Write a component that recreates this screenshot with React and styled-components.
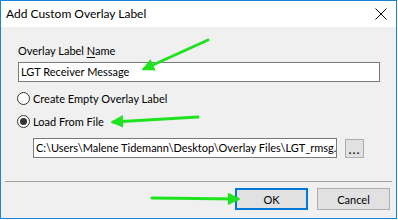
import React from "react";
import styled, { createGlobalStyle } from "styled-components";

const GlobalStyle = createGlobalStyle`
  html, body {
    margin: 0;
    padding: 0;
    background: #ffffff;
  }
  body {
    font-family: Lato, "Noto Sans", sans-serif;
    font-size: 11px;
    color: #000;
  }
`;

const Arrows = () => (
  <Overlay width="398" height="220" viewBox="0 0 398 220">
    <defs>
      <marker
        id="head"
        viewBox="0 0 10 10"
        refX="8"
        refY="5"
        markerWidth="4.2"
        markerHeight="4.2"
        orient="auto"
      >
        <path d="M0 0 L10 5 L0 10 Z" fill="#1fe31f" />
      </marker>
    </defs>
    <line x1="208" y1="40" x2="144" y2="69" stroke="#1fe31f" strokeWidth="3" strokeLinecap="round" markerEnd="url(#head)" />
    <line x1="198" y1="117" x2="113" y2="122" stroke="#1fe31f" strokeWidth="3" strokeLinecap="round" markerEnd="url(#head)" />
    <line x1="152" y1="198" x2="238" y2="199" stroke="#1fe31f" strokeWidth="3" strokeLinecap="round" markerEnd="url(#head)" />
  </Overlay>
);

const CloseIcon = () => (
  <svg width="12" height="12" viewBox="0 0 12 12">
    <path d="M0.5 0.5 L11.5 11.5 M11.5 0.5 L0.5 11.5" stroke="#000" strokeWidth="1" fill="none" />
  </svg>
);

const Radio = ({ checked, label }) => (
  <RadioRow>
    <Circle>{checked && <Dot />}</Circle>
    <span>{label}</span>
  </RadioRow>
);

const App = () => {
  return (
    <>
      <GlobalStyle />
      <Window>
        <TitleBar>
          <Title>Add Custom Overlay Label</Title>
          <Close>
            <CloseIcon />
          </Close>
        </TitleBar>
        <Content>
          <Form>
            <Label>
              Overlay Label <u>N</u>ame
            </Label>
            <TextBox width={362}>LGT Receiver Message</TextBox>
            <Options>
              <Radio label="Create Empty Overlay Label" />
              <Radio checked label="Load From File" />
            </Options>
            <PathRow>
              <TextBox width={304}>
                C:\Users\Malene Tidemann\Desktop\Overlay Files\LGT_rmsg.o
              </TextBox>
              <Browse>...</Browse>
            </PathRow>
          </Form>
          <Divider />
          <Footer>
            <Button primary>OK</Button>
            <Button>Cancel</Button>
          </Footer>
        </Content>
        <Arrows />
      </Window>
    </>
  );
};

export default App;

const Window = styled.div`
  position: relative;
  width: 397px;
  height: 219px;
  box-sizing: border-box;
  border: 1px solid #1883d7;
  display: flex;
  flex-direction: column;
  overflow: hidden;
`;

const TitleBar = styled.div`
  height: 26px;
  background: #ffffff;
  display: flex;
  align-items: center;
  justify-content: space-between;
  padding: 0 9px 0 5px;
`;

const Title = styled.div`
  font-size: 12px;
  line-height: 16px;
`;

const Close = styled.div`
  display: flex;
  align-items: center;
`;

const Content = styled.div`
  flex: 1;
  background: #f0f0f0;
  display: flex;
  flex-direction: column;
`;

const Form = styled.div`
  display: flex;
  flex-direction: column;
  padding: 16px 16px 0 17px;
`;

const Label = styled.div`
  line-height: 16px;
  margin-bottom: 3px;

  u {
    text-decoration-thickness: 1px;
    text-underline-offset: 2px;
  }
`;

const TextBox = styled.div`
  width: ${(p) => p.width}px;
  height: 20px;
  box-sizing: border-box;
  border: 1px solid #7a7a7a;
  background: #ffffff;
  padding: 0 2px;
  line-height: 18px;
  white-space: nowrap;
  overflow: hidden;
  flex-shrink: 0;
`;

const Options = styled.div`
  display: flex;
  flex-direction: column;
  gap: 3px;
  margin-top: 6px;
`;

const RadioRow = styled.div`
  height: 20px;
  display: flex;
  align-items: center;
  gap: 3px;
  margin-left: -1px;
`;

const Circle = styled.div`
  width: 13px;
  height: 13px;
  box-sizing: border-box;
  border-radius: 50%;
  border: 1px solid #333333;
  background: #ffffff;
  display: flex;
  align-items: center;
  justify-content: center;
`;

const Dot = styled.div`
  width: 7px;
  height: 7px;
  border-radius: 50%;
  background: #333333;
`;

const PathRow = styled.div`
  display: flex;
  align-items: center;
  gap: 8px;
  margin-top: 7px;
  padding-left: 15px;
`;

const Browse = styled.div`
  width: 19px;
  height: 19px;
  flex-shrink: 0;
  box-sizing: border-box;
  border: 1px solid #adadad;
  background: #e1e1e1;
  display: flex;
  align-items: center;
  justify-content: center;
  font-size: 13px;
  letter-spacing: 1px;
  line-height: 14px;
  margin-top: 1px;
`;

const Divider = styled.div`
  height: 1px;
  background: #a0a0a0;
  margin: 23px 4px 0;
`;

const Footer = styled.div`
  display: flex;
  justify-content: flex-end;
  gap: 9px;
  padding: 6px 6px 0 0;
`;

const Button = styled.div`
  width: 73px;
  height: 22px;
  box-sizing: border-box;
  border: ${(p) => (p.primary ? "2px solid #0078d7" : "1px solid #adadad")};
  background: #e1e1e1;
  display: flex;
  align-items: center;
  justify-content: center;
`;

const Overlay = styled.svg`
  position: absolute;
  left: -1px;
  top: -1px;
  pointer-events: none;
`;
